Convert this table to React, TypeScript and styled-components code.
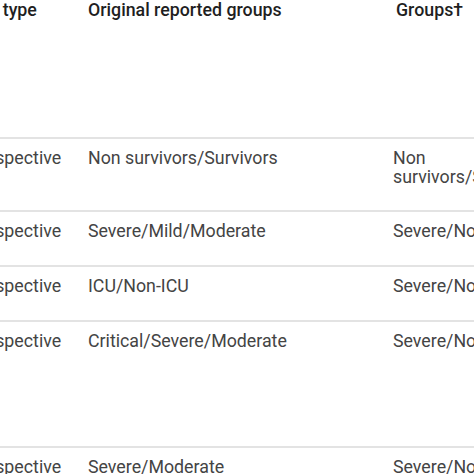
import React from "react";
import styled, { createGlobalStyle } from "styled-components";

const Global = createGlobalStyle`
  html, body {
    margin: 0;
    padding: 0;
    background: #ffffff;
    overflow: hidden;
    width: 474px;
    height: 474px;
  }
  body {
    font-family: Roboto, "Liberation Sans", Arial, sans-serif;
  }
`;

const Viewport = styled.div`
  width: 474px;
  height: 474px;
  overflow: hidden;
  background: #fff;
`;

const Table = styled.div`
  display: grid;
  grid-template-columns: 135px 305px 114px 220px;
  margin-left: -59px;
  width: max-content;
`;

const Row = styled.div`
  display: contents;
`;

const Cell = styled.div<{ $h: number; $head?: boolean; $indent?: number; $nowrap?: boolean }>`
  box-sizing: border-box;
  height: ${(p) => p.$h}px;
  padding: ${(p) => (p.$head ? "0px" : "9px")} 12px 0 ${(p) => 12 + (p.$indent ?? 0)}px;
  border-top: ${(p) => (p.$head ? "none" : "2px solid #e3e3e3")};
  font-size: 17.8px;
  line-height: 19px;
  font-weight: ${(p) => (p.$head ? 500 : 400)};
  color: ${(p) => (p.$head ? "#1f1f1f" : "#444444")};
  white-space: ${(p) => (p.$nowrap ? "nowrap" : "normal")};
  overflow-wrap: normal;
  word-break: normal;
`;

type RowData = { h: number; cells: string[] };

const header = ["Study type", "Original reported groups", "Groups\u2020", "Outcome"];

const rows: RowData[] = [
  { h: 73, cells: ["Retrospective", "Non survivors/Survivors", "Non survivors/Survivors", ""] },
  { h: 55, cells: ["Retrospective", "Severe/Mild/Moderate", "Severe/Non\u2011severe", ""] },
  { h: 55, cells: ["Retrospective", "ICU/Non-ICU", "Severe/Non\u2011severe", ""] },
  { h: 126, cells: ["Retrospective", "Critical/Severe/Moderate", "Severe/Non\u2011severe", ""] },
  { h: 80, cells: ["Retrospective", "Severe/Moderate", "Severe/Non\u2011severe", ""] },
];

export default function App() {
  return (
    <Viewport>
      <Global />
      <Table>
        <Row>
          {header.map((t, i) => (
            <Cell key={i} $h={137} $head $indent={i === 2 ? 3 : 0} $nowrap>
              {t}
            </Cell>
          ))}
        </Row>
        {rows.map((r, ri) => (
          <Row key={ri}>
            {r.cells.map((t, ci) => (
              <Cell key={ci} $h={r.h} $nowrap={ci !== 2 || ri > 0}>
                {t}
              </Cell>
            ))}
          </Row>
        ))}
      </Table>
    </Viewport>
  );
}
